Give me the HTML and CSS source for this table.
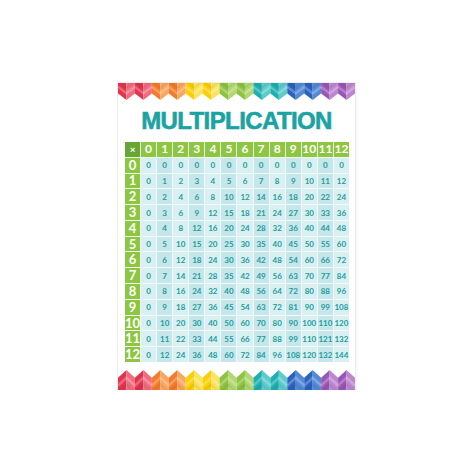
FILE: index.html
```html
<!DOCTYPE html>
<html>
<head>
<meta charset="utf-8">
<link rel="stylesheet" href="styles.css">
</head>
<body>
<div class="page">
  <div class="poster">
    <svg class="band" viewBox="0 0 238 18" preserveAspectRatio="none">
      <g class="red"><polygon class="d" points="0,0 8.5,0 8.5,18 0,11"/><polygon class="l" points="8.5,0 17,0 17,11 8.5,18"/><polygon class="d" points="17,0 25.5,0 25.5,18 17,11"/><polygon class="l" points="25.5,0 34,0 34,11 25.5,18"/><polyline class="s" points="0,4 8.5,11 17,4 25.5,11 34,4"/><polyline class="s2" points="0,-2 8.5,5 17,-2 25.5,5 34,-2"/></g>
      <g class="orange" transform="translate(34)"><polygon class="d" points="0,0 8.5,0 8.5,18 0,11"/><polygon class="l" points="8.5,0 17,0 17,11 8.5,18"/><polygon class="d" points="17,0 25.5,0 25.5,18 17,11"/><polygon class="l" points="25.5,0 34,0 34,11 25.5,18"/><polyline class="s" points="0,4 8.5,11 17,4 25.5,11 34,4"/><polyline class="s2" points="0,-2 8.5,5 17,-2 25.5,5 34,-2"/></g>
      <g class="yellow" transform="translate(68)"><polygon class="d" points="0,0 8.5,0 8.5,18 0,11"/><polygon class="l" points="8.5,0 17,0 17,11 8.5,18"/><polygon class="d" points="17,0 25.5,0 25.5,18 17,11"/><polygon class="l" points="25.5,0 34,0 34,11 25.5,18"/><polyline class="s" points="0,4 8.5,11 17,4 25.5,11 34,4"/><polyline class="s2" points="0,-2 8.5,5 17,-2 25.5,5 34,-2"/></g>
      <g class="green" transform="translate(102)"><polygon class="d" points="0,0 8.5,0 8.5,18 0,11"/><polygon class="l" points="8.5,0 17,0 17,11 8.5,18"/><polygon class="d" points="17,0 25.5,0 25.5,18 17,11"/><polygon class="l" points="25.5,0 34,0 34,11 25.5,18"/><polyline class="s" points="0,4 8.5,11 17,4 25.5,11 34,4"/><polyline class="s2" points="0,-2 8.5,5 17,-2 25.5,5 34,-2"/></g>
      <g class="teal" transform="translate(136)"><polygon class="d" points="0,0 8.5,0 8.5,18 0,11"/><polygon class="l" points="8.5,0 17,0 17,11 8.5,18"/><polygon class="d" points="17,0 25.5,0 25.5,18 17,11"/><polygon class="l" points="25.5,0 34,0 34,11 25.5,18"/><polyline class="s" points="0,4 8.5,11 17,4 25.5,11 34,4"/><polyline class="s2" points="0,-2 8.5,5 17,-2 25.5,5 34,-2"/></g>
      <g class="blue" transform="translate(170)"><polygon class="d" points="0,0 8.5,0 8.5,18 0,11"/><polygon class="l" points="8.5,0 17,0 17,11 8.5,18"/><polygon class="d" points="17,0 25.5,0 25.5,18 17,11"/><polygon class="l" points="25.5,0 34,0 34,11 25.5,18"/><polyline class="s" points="0,4 8.5,11 17,4 25.5,11 34,4"/><polyline class="s2" points="0,-2 8.5,5 17,-2 25.5,5 34,-2"/></g>
      <g class="purple" transform="translate(204)"><polygon class="d" points="0,0 8.5,0 8.5,18 0,11"/><polygon class="l" points="8.5,0 17,0 17,11 8.5,18"/><polygon class="d" points="17,0 25.5,0 25.5,18 17,11"/><polygon class="l" points="25.5,0 34,0 34,11 25.5,18"/><polyline class="s" points="0,4 8.5,11 17,4 25.5,11 34,4"/><polyline class="s2" points="0,-2 8.5,5 17,-2 25.5,5 34,-2"/></g>
    </svg>

    <h1 class="title">MULTIPLICATION</h1>

    <div class="grid">
      <div class="h x">×</div><div class="h">0</div><div class="h">1</div><div class="h">2</div><div class="h">3</div><div class="h">4</div><div class="h">5</div><div class="h">6</div><div class="h">7</div><div class="h">8</div><div class="h">9</div><div class="h">10</div><div class="h">11</div><div class="h">12</div>
      <div class="r">0</div><div class="v">0</div><div class="v">0</div><div class="v">0</div><div class="v">0</div><div class="v">0</div><div class="v">0</div><div class="v">0</div><div class="v">0</div><div class="v">0</div><div class="v">0</div><div class="v">0</div><div class="v">0</div><div class="v">0</div>
      <div class="r">1</div><div class="v">0</div><div class="v">1</div><div class="v">2</div><div class="v">3</div><div class="v">4</div><div class="v">5</div><div class="v">6</div><div class="v">7</div><div class="v">8</div><div class="v">9</div><div class="v">10</div><div class="v">11</div><div class="v">12</div>
      <div class="r">2</div><div class="v">0</div><div class="v">2</div><div class="v">4</div><div class="v">6</div><div class="v">8</div><div class="v">10</div><div class="v">12</div><div class="v">14</div><div class="v">16</div><div class="v">18</div><div class="v">20</div><div class="v">22</div><div class="v">24</div>
      <div class="r">3</div><div class="v">0</div><div class="v">3</div><div class="v">6</div><div class="v">9</div><div class="v">12</div><div class="v">15</div><div class="v">18</div><div class="v">21</div><div class="v">24</div><div class="v">27</div><div class="v">30</div><div class="v">33</div><div class="v">36</div>
      <div class="r">4</div><div class="v">0</div><div class="v">4</div><div class="v">8</div><div class="v">12</div><div class="v">16</div><div class="v">20</div><div class="v">24</div><div class="v">28</div><div class="v">32</div><div class="v">36</div><div class="v">40</div><div class="v">44</div><div class="v">48</div>
      <div class="r">5</div><div class="v">0</div><div class="v">5</div><div class="v">10</div><div class="v">15</div><div class="v">20</div><div class="v">25</div><div class="v">30</div><div class="v">35</div><div class="v">40</div><div class="v">45</div><div class="v">50</div><div class="v">55</div><div class="v">60</div>
      <div class="r">6</div><div class="v">0</div><div class="v">6</div><div class="v">12</div><div class="v">18</div><div class="v">24</div><div class="v">30</div><div class="v">36</div><div class="v">42</div><div class="v">48</div><div class="v">54</div><div class="v">60</div><div class="v">66</div><div class="v">72</div>
      <div class="r">7</div><div class="v">0</div><div class="v">7</div><div class="v">14</div><div class="v">21</div><div class="v">28</div><div class="v">35</div><div class="v">42</div><div class="v">49</div><div class="v">56</div><div class="v">63</div><div class="v">70</div><div class="v">77</div><div class="v">84</div>
      <div class="r">8</div><div class="v">0</div><div class="v">8</div><div class="v">16</div><div class="v">24</div><div class="v">32</div><div class="v">40</div><div class="v">48</div><div class="v">56</div><div class="v">64</div><div class="v">72</div><div class="v">80</div><div class="v">88</div><div class="v">96</div>
      <div class="r">9</div><div class="v">0</div><div class="v">9</div><div class="v">18</div><div class="v">27</div><div class="v">36</div><div class="v">45</div><div class="v">54</div><div class="v">63</div><div class="v">72</div><div class="v">81</div><div class="v">90</div><div class="v">99</div><div class="v">108</div>
      <div class="r">10</div><div class="v">0</div><div class="v">10</div><div class="v">20</div><div class="v">30</div><div class="v">40</div><div class="v">50</div><div class="v">60</div><div class="v">70</div><div class="v">80</div><div class="v">90</div><div class="v">100</div><div class="v">110</div><div class="v">120</div>
      <div class="r">11</div><div class="v">0</div><div class="v">11</div><div class="v">22</div><div class="v">33</div><div class="v">44</div><div class="v">55</div><div class="v">66</div><div class="v">77</div><div class="v">88</div><div class="v">99</div><div class="v">110</div><div class="v">121</div><div class="v">132</div>
      <div class="r">12</div><div class="v">0</div><div class="v">12</div><div class="v">24</div><div class="v">36</div><div class="v">48</div><div class="v">60</div><div class="v">72</div><div class="v">84</div><div class="v">96</div><div class="v">108</div><div class="v">120</div><div class="v">132</div><div class="v">144</div>
    </div>

    <svg class="band bottom" viewBox="0 0 238 18" preserveAspectRatio="none">
      <g class="red"><polygon class="d" points="0,0 8.5,0 8.5,18 0,11"/><polygon class="l" points="8.5,0 17,0 17,11 8.5,18"/><polygon class="d" points="17,0 25.5,0 25.5,18 17,11"/><polygon class="l" points="25.5,0 34,0 34,11 25.5,18"/><polyline class="s" points="0,4 8.5,11 17,4 25.5,11 34,4"/><polyline class="s2" points="0,-2 8.5,5 17,-2 25.5,5 34,-2"/></g>
      <g class="orange" transform="translate(34)"><polygon class="d" points="0,0 8.5,0 8.5,18 0,11"/><polygon class="l" points="8.5,0 17,0 17,11 8.5,18"/><polygon class="d" points="17,0 25.5,0 25.5,18 17,11"/><polygon class="l" points="25.5,0 34,0 34,11 25.5,18"/><polyline class="s" points="0,4 8.5,11 17,4 25.5,11 34,4"/><polyline class="s2" points="0,-2 8.5,5 17,-2 25.5,5 34,-2"/></g>
      <g class="yellow" transform="translate(68)"><polygon class="d" points="0,0 8.5,0 8.5,18 0,11"/><polygon class="l" points="8.5,0 17,0 17,11 8.5,18"/><polygon class="d" points="17,0 25.5,0 25.5,18 17,11"/><polygon class="l" points="25.5,0 34,0 34,11 25.5,18"/><polyline class="s" points="0,4 8.5,11 17,4 25.5,11 34,4"/><polyline class="s2" points="0,-2 8.5,5 17,-2 25.5,5 34,-2"/></g>
      <g class="green" transform="translate(102)"><polygon class="d" points="0,0 8.5,0 8.5,18 0,11"/><polygon class="l" points="8.5,0 17,0 17,11 8.5,18"/><polygon class="d" points="17,0 25.5,0 25.5,18 17,11"/><polygon class="l" points="25.5,0 34,0 34,11 25.5,18"/><polyline class="s" points="0,4 8.5,11 17,4 25.5,11 34,4"/><polyline class="s2" points="0,-2 8.5,5 17,-2 25.5,5 34,-2"/></g>
      <g class="teal" transform="translate(136)"><polygon class="d" points="0,0 8.5,0 8.5,18 0,11"/><polygon class="l" points="8.5,0 17,0 17,11 8.5,18"/><polygon class="d" points="17,0 25.5,0 25.5,18 17,11"/><polygon class="l" points="25.5,0 34,0 34,11 25.5,18"/><polyline class="s" points="0,4 8.5,11 17,4 25.5,11 34,4"/><polyline class="s2" points="0,-2 8.5,5 17,-2 25.5,5 34,-2"/></g>
      <g class="blue" transform="translate(170)"><polygon class="d" points="0,0 8.5,0 8.5,18 0,11"/><polygon class="l" points="8.5,0 17,0 17,11 8.5,18"/><polygon class="d" points="17,0 25.5,0 25.5,18 17,11"/><polygon class="l" points="25.5,0 34,0 34,11 25.5,18"/><polyline class="s" points="0,4 8.5,11 17,4 25.5,11 34,4"/><polyline class="s2" points="0,-2 8.5,5 17,-2 25.5,5 34,-2"/></g>
      <g class="purple" transform="translate(204)"><polygon class="d" points="0,0 8.5,0 8.5,18 0,11"/><polygon class="l" points="8.5,0 17,0 17,11 8.5,18"/><polygon class="d" points="17,0 25.5,0 25.5,18 17,11"/><polygon class="l" points="25.5,0 34,0 34,11 25.5,18"/><polyline class="s" points="0,4 8.5,11 17,4 25.5,11 34,4"/><polyline class="s2" points="0,-2 8.5,5 17,-2 25.5,5 34,-2"/></g>
    </svg>
  </div>
</div>
</body>
</html>
```
FILE: styles.css
```css
html, body {
  margin: 0;
  background: #ffffff;
}

.page {
  padding: 83px 0 0 118px;
}

.poster {
  width: 237px;
  height: 307px;
  background: #ffffff;
  box-shadow: 0 0 0 1px #ededed, 1px 1px 3px rgba(0, 0, 0, 0.08);
  display: flex;
  flex-direction: column;
}

.band {
  display: block;
  width: 237px;
  height: 17px;
  flex: none;
}

.band.bottom {
  height: 20px;
  margin-top: 8px;
  transform: scaleY(-1);
}

.red .d { fill: #e2344d; }
.red .l { fill: #f16b7e; }
.orange .d { fill: #f47b2b; }
.orange .l { fill: #f9a65f; }
.yellow .d { fill: #fbcf05; }
.yellow .l { fill: #fde35c; }
.green .d { fill: #8cc43f; }
.green .l { fill: #b2d772; }
.teal .d { fill: #1eafb0; }
.teal .l { fill: #5ccbcb; }
.blue .d { fill: #2a63bf; }
.blue .l { fill: #528ad6; }
.purple .d { fill: #9a56b5; }
.purple .l { fill: #bd87d0; }

.s {
  fill: none;
  stroke: #ffffff;
  stroke-opacity: 0.25;
  stroke-width: 2.5;
}

.s2 {
  fill: none;
  stroke: #000000;
  stroke-opacity: 0.06;
  stroke-width: 2.5;
}

.title {
  flex: none;
  margin: 9px 0 0;
  height: 24px;
  line-height: 24px;
  text-align: center;
  font-family: "Liberation Sans", Arial, sans-serif;
  font-weight: bold;
  font-size: 24px;
  letter-spacing: -0.6px;
  color: #1aa3a2;
  -webkit-text-stroke: 0.6px #1aa3a2;
}

.grid {
  flex: none;
  margin: 9px 0 0 7px;
  width: 224px;
  height: 220px;
  display: grid;
  grid-template-columns: repeat(14, minmax(0, 1fr));
  grid-template-rows: repeat(14, minmax(0, 1fr));
  gap: 1px;
  background: #f2fafa;
}

.grid > div {
  display: flex;
  align-items: center;
  justify-content: center;
  white-space: nowrap;
  line-height: 1;
  overflow: visible;
  font-family: Lato, "Open Sans", sans-serif;
}

.h {
  background: #8dc63f;
  color: #ffffff;
  font-weight: bold;
  font-size: 12px;
}

.h.x {
  background: #67a633;
  font-size: 10px;
}

.r {
  background: #8dc63f;
  color: #ffffff;
  font-weight: bold;
  font-size: 13px;
}

.v {
  background: #d9f0f2;
  color: #1f9c9e;
  font-weight: bold;
  font-size: 8px;
}

.v:nth-child(odd) {
  background: #c5e6ea;
}
```
